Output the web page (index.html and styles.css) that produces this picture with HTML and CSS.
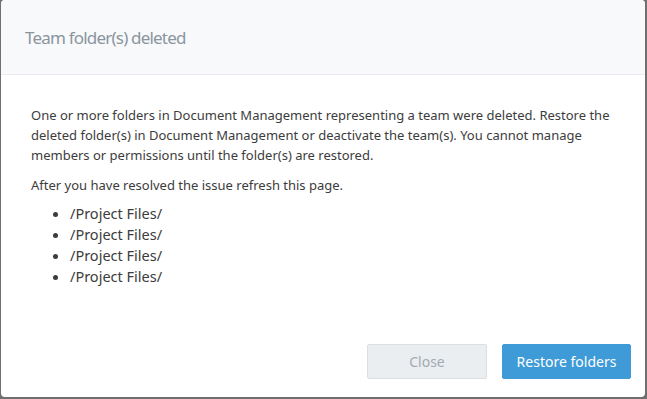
FILE: index.html
```html
<!DOCTYPE html>
<html lang="en">
  <head>
    <meta charset="UTF-8" />
    <meta name="viewport" content="width=device-width, initial-scale=1.0" />
    <title>Team folder(s) deleted</title>
    <link rel="stylesheet" href="styles.css">
  </head>
  <body>
    <div class="modal">
      <div class="modalHeader">
        <h2>Team folder(s) deleted</h2>
      </div>

      <div class="modalBody">
        <p>
          One or more folders in Document Management representing a team were
          deleted. Restore the deleted folder(s) in Document Management or
          deactivate the team(s). You cannot manage members or permissions
          until the folder(s) are restored.
        </p>
        <p>After you have resolved the issue refresh this page.</p>

        <ul class="folders">
          <li>/Project Files/</li>
          <li>/Project Files/</li>
          <li>/Project Files/</li>
          <li>/Project Files/</li>
        </ul>
      </div>

      <div class="modalFooter">
        <button class="btnClose">Close</button>
        <button class="btnPrimary">Restore folders</button>
      </div>
    </div>
  </body>
</html>
```

FILE: styles.css
```css
html,
body {
  height: 100%;
}

body {
  margin: 0;
  background: #6f6f6f;
  font-family: "Noto Sans", sans-serif;
}

.modal {
  box-sizing: border-box;
  margin: 0 2px 0 1px;
  height: 397px;
  background: #fff;
  border-radius: 4px;
  display: flex;
  flex-direction: column;
  overflow: hidden;
}

.modalHeader {
  height: 74px;
  background: #f8f9fa;
  border-bottom: 1px solid #e9ebee;
  display: flex;
  align-items: center;
  padding: 0 24px;
}

.modalHeader h2 {
  margin: 0;
  font-size: 17px;
  letter-spacing: -0.8px;
  font-weight: normal;
  color: #8a959e;
}

.modalBody {
  flex: 1;
  padding: 30px 30px 0 30px;
  font-size: 13px;
  line-height: 20px;
  color: #3c3c3c;
}

.modalBody p {
  margin: 0 0 10px;
}

/* collapses with the paragraph margin above */
.folders {
  margin: -2px 0 0;
  padding-left: 39px;
  font-size: 14.5px;
  line-height: 21px;
}

.modalFooter {
  display: flex;
  justify-content: flex-end;
  gap: 15px;
  padding: 0 14px 18px;
}

button {
  font-family: inherit;
  font-size: 14px;
  height: 35px;
  border-radius: 2px;
  cursor: pointer;
}

.btnClose {
  width: 120px;
  background: #ebeef1;
  border: 1px solid #dadfe3;
  color: #a2aab2;
}

.btnPrimary {
  width: 129px;
  background: #3e9bd7;
  border: 1px solid #3e9bd7;
  color: #fff;
}
```
